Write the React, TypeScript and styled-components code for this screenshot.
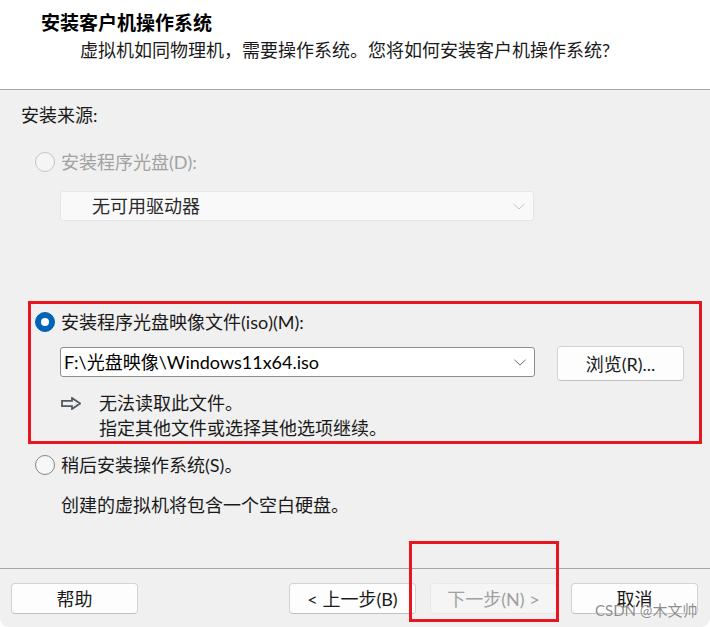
import React from "react";
import styled, { createGlobalStyle } from "styled-components";

const GlobalStyle = createGlobalStyle`
  *, *::before, *::after { box-sizing: border-box; }
  html, body { margin: 0; padding: 0; background: #ffffff; }
  body { font-family: Lato, "Noto Sans CJK SC", sans-serif; }
`;

const Window = styled.div`
  position: relative;
  width: 710px;
  height: 627px;
  background: #f0f0f0;
  border-radius: 0 0 9px 9px;
  overflow: hidden;
  display: flex;
  flex-direction: column;
  font-size: 18px;
  color: #1a1a1a;
`;

const Header = styled.header`
  height: 90px;
  flex: none;
  background: #ffffff;
  border-bottom: 1px solid #a5a5a5;
  padding: 11px 0 0 41px;
`;

const Title = styled.h1`
  margin: 0;
  font-size: 19px;
  font-weight: 700;
  line-height: 24px;
  color: #000;
`;

const Subtitle = styled.p`
  margin: 3px 0 0 39px;
  font-size: 18px;
  line-height: 24px;
  color: #1a1a1a;
`;

const Content = styled.main`
  height: 478px;
  flex: none;
  padding-top: 13px;
  display: flex;
  flex-direction: column;
  align-items: flex-start;
`;

const SectionLabel = styled.div`
  margin-left: 21px;
  line-height: 24px;
`;

const OptionRow = styled.label<{ $disabled?: boolean; $indent?: number; $top?: number }>`
  display: flex;
  align-items: center;
  gap: 6px;
  height: 24px;
  line-height: 24px;
  margin-left: ${(p) => p.$indent ?? 35}px;
  margin-top: ${(p) => p.$top ?? 0}px;
  color: ${(p) => (p.$disabled ? "#a2a2a2" : "#1a1a1a")};
`;

const RadioDot = styled.span<{ $checked?: boolean; $disabled?: boolean }>`
  width: 20px;
  height: 20px;
  flex: none;
  border-radius: 50%;
  display: flex;
  align-items: center;
  justify-content: center;
  background: ${(p) => (p.$checked ? "#0063b8" : p.$disabled ? "#f5f5f5" : "#f7f7f7")};
  border: 1px solid
    ${(p) => (p.$checked ? "#0063b8" : p.$disabled ? "#c4c4c4" : "#858585")};
  &::after {
    content: "";
    display: ${(p) => (p.$checked ? "block" : "none")};
    width: 8px;
    height: 8px;
    border-radius: 50%;
    background: #ffffff;
  }
`;

const Combo = styled.div<{ $disabled?: boolean; $width: number; $padLeft: number }>`
  width: ${(p) => p.$width}px;
  height: 30px;
  display: flex;
  align-items: center;
  justify-content: space-between;
  padding: 0 8px 0 ${(p) => p.$padLeft}px;
  background: ${(p) => (p.$disabled ? "#f9f9f9" : "#ffffff")};
  border: 1px solid ${(p) => (p.$disabled ? "#e6e6e6" : "#8d8d8d")};
  border-radius: 3px;
  color: ${(p) => (p.$disabled ? "#2a2a2a" : "#000")};
  line-height: 24px;
  white-space: nowrap;
`;

const DriveCombo = styled(Combo)`
  margin: 17px 0 0 60px;
`;

const Highlight = styled.section`
  margin: 80px 0 0 28px;
  width: 674px;
  border: 3px solid #e8171f;
  padding: 6px 0 0 4px;
  display: flex;
  flex-direction: column;
  align-items: flex-start;
`;

const FileRow = styled.div`
  display: flex;
  align-items: flex-start;
  gap: 22px;
  margin: 12px 0 0 25px;
`;

const FileCombo = styled(Combo)`
  margin-top: 1px;
`;

const Button = styled.button<{ $disabled?: boolean; $height?: number }>`
  width: 127px;
  height: ${(p) => p.$height ?? 31}px;
  flex: none;
  font-family: Lato, "Noto Sans CJK SC", sans-serif;
  font-size: 18px;
  line-height: 24px;
  padding: 0;
  background: ${(p) => (p.$disabled ? "#f5f5f5" : "#fdfdfd")};
  border: 1px solid ${(p) => (p.$disabled ? "#e8e8e8" : "#d3d3d3")};
  border-bottom-color: ${(p) => (p.$disabled ? "#e8e8e8" : "#c2c2c2")};
  border-radius: 4px;
  color: ${(p) => (p.$disabled ? "#a0a0a0" : "#1a1a1a")};
`;

const Message = styled.div`
  display: flex;
  align-items: flex-start;
  gap: 18px;
  margin: 10px 0 0 26px;
  line-height: 25px;
`;

const ArrowBox = styled.span`
  height: 25px;
  display: flex;
  align-items: center;
`;

const MessageText = styled.div`
  display: flex;
  flex-direction: column;
`;

const Note = styled.div`
  margin: 16px 0 0 61px;
  line-height: 24px;
`;

const Footer = styled.footer`
  flex: 1;
  border-top: 1px solid #a5a5a5;
  padding: 14px 12px 0 11px;
  display: flex;
  align-items: flex-start;
`;

const NavGroup = styled.div`
  margin-left: auto;
  display: flex;
  gap: 14px;
`;

const Annotation = styled.div`
  position: absolute;
  left: 409px;
  top: 541px;
  width: 150px;
  height: 81px;
  border: 3px solid #e8171f;
  pointer-events: none;
`;

const Watermark = styled.div`
  position: absolute;
  left: 595px;
  top: 601px;
  font-family: Lato, "Noto Sans CJK SC", sans-serif;
  font-size: 15px;
  line-height: 18px;
  color: rgba(120, 120, 120, 0.85);
  text-shadow: 0 0 1px #ffffff;
  white-space: nowrap;
  pointer-events: none;
`;

const Chevron = ({ color }: { color: string }) => (
  <svg width="12" height="7" viewBox="0 0 12 7" aria-hidden="true">
    <path d="M0.5 0.8 L6 6 L11.5 0.8" fill="none" stroke={color} strokeWidth="1" />
  </svg>
);

const OutlineArrow = () => (
  <svg width="20" height="13" viewBox="0 0 20 13" aria-hidden="true">
    <polygon
      points="1,3.8 11,3.8 11,1 19,6.5 11,12 11,9.2 1,9.2"
      fill="none"
      stroke="#4f5a63"
      strokeWidth="1.8"
      strokeLinejoin="miter"
    />
  </svg>
);

export default function App() {
  return (
    <>
      <GlobalStyle />
      <Window>
        <Header>
          <Title>安装客户机操作系统</Title>
          <Subtitle>虚拟机如同物理机，需要操作系统。您将如何安装客户机操作系统?</Subtitle>
        </Header>
        <Content>
          <SectionLabel>安装来源:</SectionLabel>
          <OptionRow $disabled $top={23}>
            <RadioDot $disabled />
            安装程序光盘(D):
          </OptionRow>
          <DriveCombo $disabled $width={474} $padLeft={31}>
            <span>无可用驱动器</span>
            <Chevron color="#c4c4c4" />
          </DriveCombo>
          <Highlight>
            <OptionRow $indent={0}>
              <RadioDot $checked />
              安装程序光盘映像文件(iso)(M):
            </OptionRow>
            <FileRow>
              <FileCombo $width={475} $padLeft={3}>
                <span>F:\光盘映像\Windows11x64.iso</span>
                <Chevron color="#6f6f6f" />
              </FileCombo>
              <Button $height={35}>浏览(R)...</Button>
            </FileRow>
            <Message>
              <ArrowBox>
                <OutlineArrow />
              </ArrowBox>
              <MessageText>
                <span>无法读取此文件。</span>
                <span>指定其他文件或选择其他选项继续。</span>
              </MessageText>
            </Message>
          </Highlight>
          <OptionRow $top={9}>
            <RadioDot />
            稍后安装操作系统(S)。
          </OptionRow>
          <Note>创建的虚拟机将包含一个空白硬盘。</Note>
        </Content>
        <Footer>
          <Button>帮助</Button>
          <NavGroup>
            <Button>&lt; 上一步(B)</Button>
            <Button $disabled>下一步(N) &gt;</Button>
            <Button>取消</Button>
          </NavGroup>
        </Footer>
        <Annotation />
        <Watermark>CSDN @木文帅</Watermark>
      </Window>
    </>
  );
}
